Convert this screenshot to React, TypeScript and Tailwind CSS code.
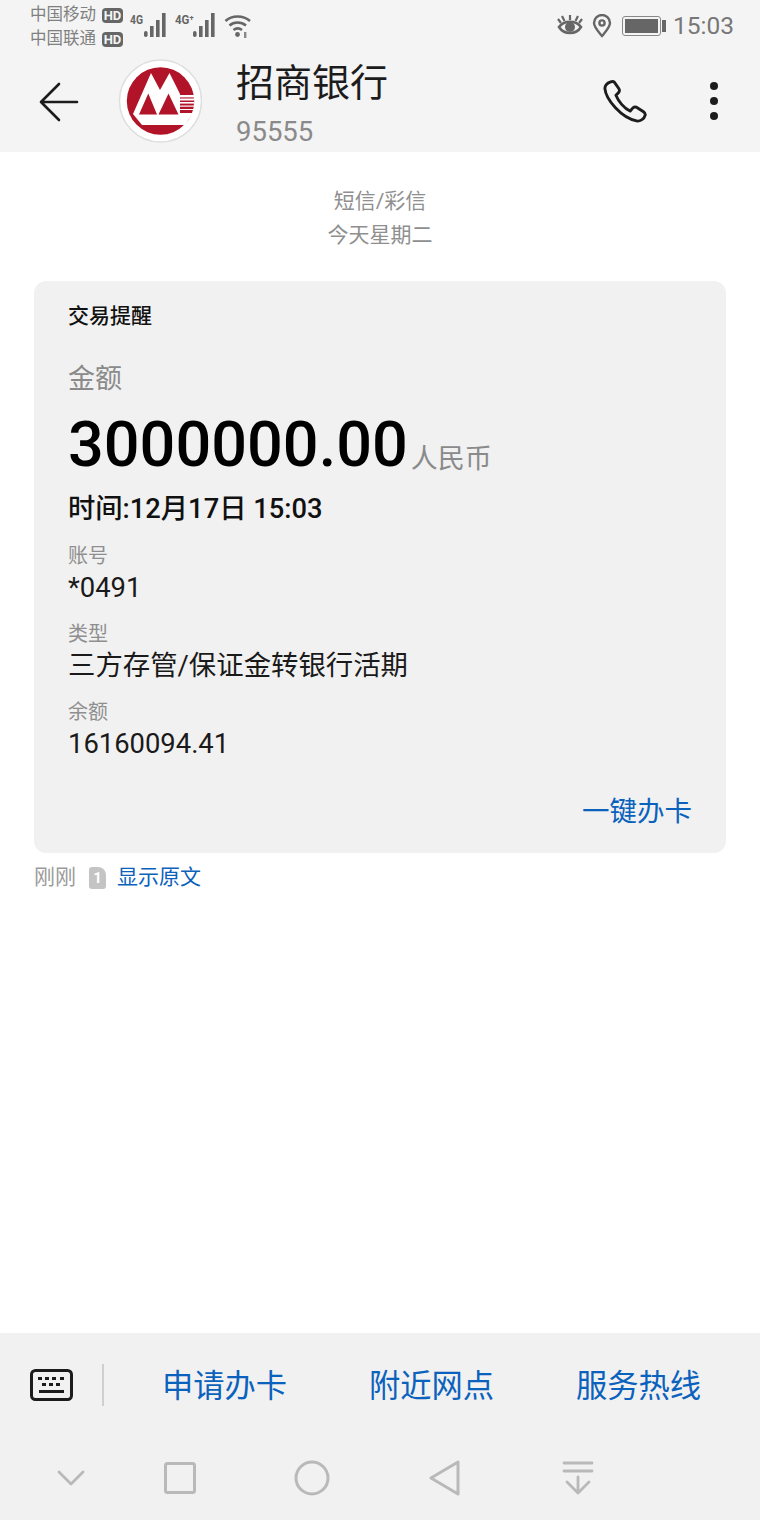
import React from "react";

const Signal = ({ label, w }: { label: string; w: number }) => (
  <svg width={w} height="30" viewBox={`0 0 ${w} 30`}>
    <text x="0" y="13" fontSize="12" fontWeight="700" fill="#666" fontFamily="Roboto, sans-serif" textLength={label.length > 2 ? 19 : 13} lengthAdjust="spacingAndGlyphs">{label}</text>
    <g fill="#666">
      <rect x={w - 24} y="20" width="3.6" height="6" rx="1.8" />
      <rect x={w - 18} y="15" width="3.6" height="11" />
      <rect x={w - 12} y="9" width="3.6" height="17" />
      <rect x={w - 6} y="2" width="3.6" height="24" />
    </g>
  </svg>
);

const Logo = () => (
  <svg width="84" height="84" viewBox="0 0 84 84">
    <circle cx="42.5" cy="42" r="41" fill="#fff" stroke="#dedede" strokeWidth="1.5" />
    <circle cx="42.5" cy="42" r="33.7" fill="#b11428" />
    <path d="M33 14 L42 31 L51.500 14 L62 35 L62 54 L75 54 L67 66 L24 66 L15 55 Z" fill="#fff" />
    <path d="M30.300 34.500 L39 55.500 L21 55.500 Z M50.500 34.500 L60.500 55.500 L40.500 55.500 Z" fill="#b11428" />
    <g fill="#fff">
      <rect x="62" y="36" width="14" height="2.400" />
      <rect x="62" y="39.500" width="14" height="2" />
      <rect x="62" y="43" width="14" height="1.600" />
      <rect x="62" y="46.500" width="14" height="1.200" />
      <rect x="62" y="50" width="14" height="1" />
    </g>
  </svg>
);

const Label = ({ children }: { children: React.ReactNode }) => (
  <div className="text-[20px] leading-[28px] text-[#8f8f8f]">{children}</div>
);
const Value = ({ children }: { children: React.ReactNode }) => (
  <div className="text-[27.4px] leading-[36px] text-[#1a1a1a]">{children}</div>
);

export default function App() {
  return (
    <div
      className="w-[760px] h-[1520px] flex flex-col bg-white overflow-hidden"
      style={{ fontFamily: 'Roboto, "Noto Sans CJK SC", sans-serif' }}
    >
      <div className="h-[152px] bg-[#f4f4f4] flex flex-col shrink-0">
        <div className="h-[50px] pt-[2px] flex items-center pl-[30px] pr-[26px]">
          <div className="flex flex-col text-[16.5px] leading-[24px] text-[#808080] mt-[2px] w-[94px]">
            <div className="flex items-center gap-[6px] whitespace-nowrap">
              中国移动
              <span className="bg-[#666] text-[#f4f4f4] rounded-[4px] text-[13px] leading-[15px] font-bold w-[21px] text-center shrink-0">HD</span>
            </div>
            <div className="flex items-center gap-[6px] whitespace-nowrap">
              中国联通
              <span className="bg-[#666] text-[#f4f4f4] rounded-[4px] text-[13px] leading-[15px] font-bold w-[21px] text-center shrink-0">HD</span>
            </div>
          </div>
          <div className="flex items-center gap-[7px] ml-[6px]">
            <Signal label="4G" w={38} />
            <Signal label="4G⁺" w={42} />
            <svg width="28" height="26" viewBox="0 0 28 26" fill="none" stroke="#666" strokeWidth="2.600">
              <path d="M1.500 8 C8 2 19 2 26 8" />
              <path d="M5.500 12.500 C10 8.500 17 8.500 22 12.500" />
              <path d="M9.500 17 C12 15 15.500 15 18 17" />
              <circle cx="13.500" cy="21.500" r="2.400" fill="#666" stroke="none" />
              <rect x="20" y="19" width="2.400" height="6" fill="#888" stroke="none" />
            </svg>
          </div>
          <div className="flex-1" />
          <svg width="26" height="24" viewBox="0 0 26 24" fill="none" stroke="#666" strokeWidth="2.600">
            <path d="M2 13 C7 6 19 6 24 13 C19 21 7 21 2 13 Z" />
            <circle cx="13" cy="13" r="5" fill="#666" stroke="none" />
            <path d="M13 1 V6 M5 2 L7.500 7 M21 2 L18.500 7 M1 5 L4 9 M25 5 L22 9" strokeWidth="2.200" />
          </svg>
          <svg width="20" height="24" viewBox="0 0 20 24" fill="none" stroke="#666" strokeWidth="2.400" className="ml-[9px]">
            <path d="M10 22 C5 16 2 13 2 9 A8 8 0 0 1 18 9 C18 13 15 16 10 22 Z" />
            <circle cx="10" cy="9" r="2.600" />
          </svg>
          <div className="flex items-center ml-[10px]">
            <div className="w-[39px] h-[20px] rounded-[3px] border border-[#888] p-[2px]">
              <div className="w-full h-full bg-[#666]" />
            </div>
            <div className="w-[4px] h-[12px] bg-[#666] ml-[1px]" />
          </div>
          <div className="text-[24.5px] text-[#777] ml-[7px] leading-none">15:03</div>
        </div>

        <div className="flex-1 flex items-center pl-[39px] pr-[36px]">
          <svg width="40" height="40" viewBox="0 0 40 40" fill="none" stroke="#1c1c1c" strokeWidth="2.600" strokeLinecap="round" strokeLinejoin="round" className="mt-[1px]">
            <path d="M38 20 H2 M20 2 L2 20 L20 38" />
          </svg>
          <div className="ml-[39px] shrink-0 w-[84px] h-[84px]">
            <Logo />
          </div>
          <div className="ml-[34px] flex flex-col mt-[7px]">
            <div className="text-[38px] leading-[46px] text-[#1c1c1c]">招商银行</div>
            <div className="text-[27.5px] leading-[34px] text-[#8a8a8a] mt-[9px]">95555</div>
          </div>
          <div className="flex-1" />
          <svg width="44" height="44" viewBox="0 0 46 46" fill="none" stroke="#1c1c1c" strokeWidth="3" strokeLinejoin="round" className="mr-[63px]">
            <path d="M8 3 C5 4 2 6 2 10 C3 21 19 41 36 44 C39 44 43 42 44 38 C44.500 37 44 35.500 42 34 L35 29.500 C33.500 29 32 29 31 30.500 L28.500 33.500 C22 31 16 23 13.500 17 L16 14.500 C17.500 13 17.500 11.500 16.500 10 L12 3.500 C11 2.500 9.500 2.500 8 3 Z" />
          </svg>
          <div className="flex flex-col gap-[7px] mr-[6px]">
            <div className="w-[8px] h-[8px] rounded-full bg-[#1c1c1c]" />
            <div className="w-[8px] h-[8px] rounded-full bg-[#1c1c1c]" />
            <div className="w-[8px] h-[8px] rounded-full bg-[#1c1c1c]" />
          </div>
        </div>
      </div>

      <div className="flex-1 flex flex-col px-[34px] pt-[32px]">
        <div className="text-center text-[21px] leading-[34px] text-[#8f8f8f]">
          <div>短信/彩信</div>
          <div>今天星期二</div>
        </div>
        <div className="mt-[29px] h-[572px] rounded-[12px] bg-[#f1f1f1] pt-[20px] px-[34px] flex flex-col">
          <div className="text-[21px] leading-[30px] font-medium text-[#111]">交易提醒</div>
          <div className="text-[27px] leading-[36px] text-[#8a8a8a] mt-[30px]">金额</div>
          <div className="flex items-end mt-[12px] h-[72px]">
            <span className="text-[63px] leading-[72px] font-medium text-black">3000000.00</span>
            <span className="text-[27px] leading-[36px] text-[#8a8a8a] ml-[3px] mb-[4px]">人民币</span>
          </div>
          <div className="text-[27.3px] leading-[36px] font-medium text-[#111] mt-[10px]">时间:12月17日 15:03</div>
          <div className="mt-[15px]"><Label>账号</Label></div>
          <Value>*0491</Value>
          <div className="mt-[14px]"><Label>类型</Label></div>
          <Value>三方存管/保证金转银行活期</Value>
          <div className="mt-[14px]"><Label>余额</Label></div>
          <Value>16160094.41</Value>
          <div className="text-right text-[27.5px] leading-[36px] text-[#0b62bd] mt-[32px]">一键办卡</div>
        </div>
        <div className="flex items-center mt-[9px] h-[32px] text-[21px]">
          <span className="text-[#9a9a9a]">刚刚</span>
          <span className="ml-[13px] w-[17px] h-[22px] bg-[#c4c4c4] rounded-[3px] rounded-tr-[8px] text-white text-[15px] leading-[22px] font-bold text-center">1</span>
          <span className="ml-[11px] text-[#0b62bd]">显示原文</span>
        </div>
      </div>

      <div className="h-[187px] bg-[#f1f1f1] shrink-0 flex flex-col">
        <div className="h-[104px] flex items-center pl-[30px]">
          <svg width="43" height="32" viewBox="0 0 43 32" fill="none" className="shrink-0">
            <rect x="1.500" y="1.500" width="40" height="29" rx="4" stroke="#1c1c1c" strokeWidth="3" />
            <g fill="#1c1c1c">
              <rect x="8" y="8" width="4" height="3" />
              <rect x="15" y="8" width="4" height="3" />
              <rect x="22" y="8" width="4" height="3" />
              <rect x="30" y="8" width="4" height="3" />
              <rect x="12" y="14" width="4" height="3" />
              <rect x="19" y="14" width="4" height="3" />
              <rect x="26" y="14" width="4" height="3" />
              <rect x="9" y="21" width="25" height="3" />
            </g>
          </svg>
          <div className="ml-[29px] w-[2px] h-[42px] bg-[#cfcfcf] shrink-0" />
          <div className="ml-[17px] mt-[3px] grid grid-cols-[207px_207px_207px] text-center text-[31.3px] text-[#0b62bd] leading-none">
            <span>申请办卡</span>
            <span>附近网点</span>
            <span>服务热线</span>
          </div>
        </div>
        <div className="flex-1 flex items-start pl-[56px] pt-[24px]">
          <svg width="30" height="34" viewBox="0 0 30 34" fill="none" stroke="#b9b9b9" strokeWidth="2.800" strokeLinecap="round" strokeLinejoin="round">
            <path d="M3 11 L15 23 L27 11" />
          </svg>
          <svg width="32" height="32" viewBox="0 0 32 32" fill="none" stroke="#b9b9b9" strokeWidth="3" className="ml-[78px] mt-[1px]">
            <rect x="1.500" y="1.500" width="29" height="29" rx="2" />
          </svg>
          <svg width="36" height="36" viewBox="0 0 36 36" fill="none" stroke="#b9b9b9" strokeWidth="3" className="ml-[98px] mt-[-1px]">
            <circle cx="18" cy="18" r="16" />
          </svg>
          <svg width="32" height="36" viewBox="0 0 32 36" fill="none" stroke="#b9b9b9" strokeWidth="3" strokeLinejoin="round" className="ml-[99px] mt-[-1px]">
            <path d="M2 18 L29 2 L29 34 Z" />
          </svg>
          <svg width="32" height="34" viewBox="0 0 32 34" fill="none" stroke="#b9b9b9" strokeWidth="2.800" strokeLinecap="round" strokeLinejoin="round" className="ml-[101px]">
            <path d="M2 2 H30 M2 10 H30 M16 16 V32 M5 21 L16 32 L27 21" />
          </svg>
        </div>
      </div>
    </div>
  );
}
